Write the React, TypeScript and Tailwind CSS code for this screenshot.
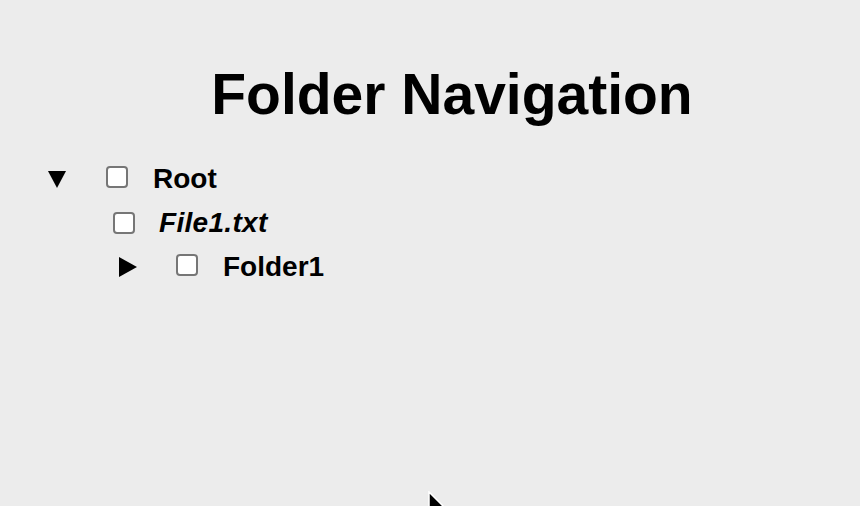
import React, { useState } from "react";

type Node = {
  name: string;
  kind: "folder" | "file";
  children?: Node[];
};

const tree: Node = {
  name: "Root",
  kind: "folder",
  children: [
    { name: "File1.txt", kind: "file" },
    { name: "Folder1", kind: "folder", children: [] },
  ],
};

const Caret = ({ open }: { open: boolean }) =>
  open ? (
    <svg width="18" height="18" viewBox="0 0 18 18" className="shrink-0">
      <polygon points="0,1 18,1 9,18" fill="#000" />
    </svg>
  ) : (
    <svg width="19" height="20" viewBox="0 0 19 20" className="shrink-0">
      <polygon points="1,0 19,10 1,20" fill="#000" />
    </svg>
  );

const Box = () => (
  <input
    type="checkbox"
    className="appearance-none w-[22px] h-[22px] shrink-0 rounded-[4px] border-2 border-[#767676] bg-white"
  />
);

const FolderRow = ({ node, defaultOpen }: { node: Node; defaultOpen: boolean }) => {
  const [open, setOpen] = useState(defaultOpen);
  return (
    <div>
      <div className="flex items-center h-[44px]">
        <button onClick={() => setOpen(!open)} className="flex items-center w-[19px]">
          <Caret open={open} />
        </button>
        <div className="ml-[39px]">
          <Box />
        </div>
        <span className="ml-[25px] font-bold">{node.name}</span>
      </div>
      {open && (
        <div className="pl-[70px]">
          {node.children?.map((child) =>
            child.kind === "folder" ? (
              <FolderRow key={child.name} node={child} defaultOpen={false} />
            ) : (
              <div key={child.name} className="flex items-center h-[44px] -ml-[5px]">
                <Box />
                <span className="ml-[24px] font-bold italic tracking-[0.3px]">{child.name}</span>
              </div>
            )
          )}
        </div>
      )}
    </div>
  );
};

export default function App() {
  return (
    <div className="relative w-[860px] h-[506px] overflow-hidden bg-[#ececec] text-black font-['Liberation_Sans',Arial,sans-serif]">
      <h1 className="pt-[62px] pl-[44px] text-center text-[57px] leading-[64px] font-bold">
        Folder Navigation
      </h1>
      <div className="mt-[31px] pl-[48px] text-[28px] leading-[32px]">
        <FolderRow node={tree} defaultOpen={true} />
      </div>
      <svg
        width="20"
        height="28"
        viewBox="0 0 20 28"
        className="absolute left-[428px] top-[491px]"
      >
        <path d="M1 1 L1 22 L6 17 L10 26 L13 25 L9 16 L16 16 Z" fill="#000" stroke="#fff" strokeWidth="1.5" />
      </svg>
    </div>
  );
}
